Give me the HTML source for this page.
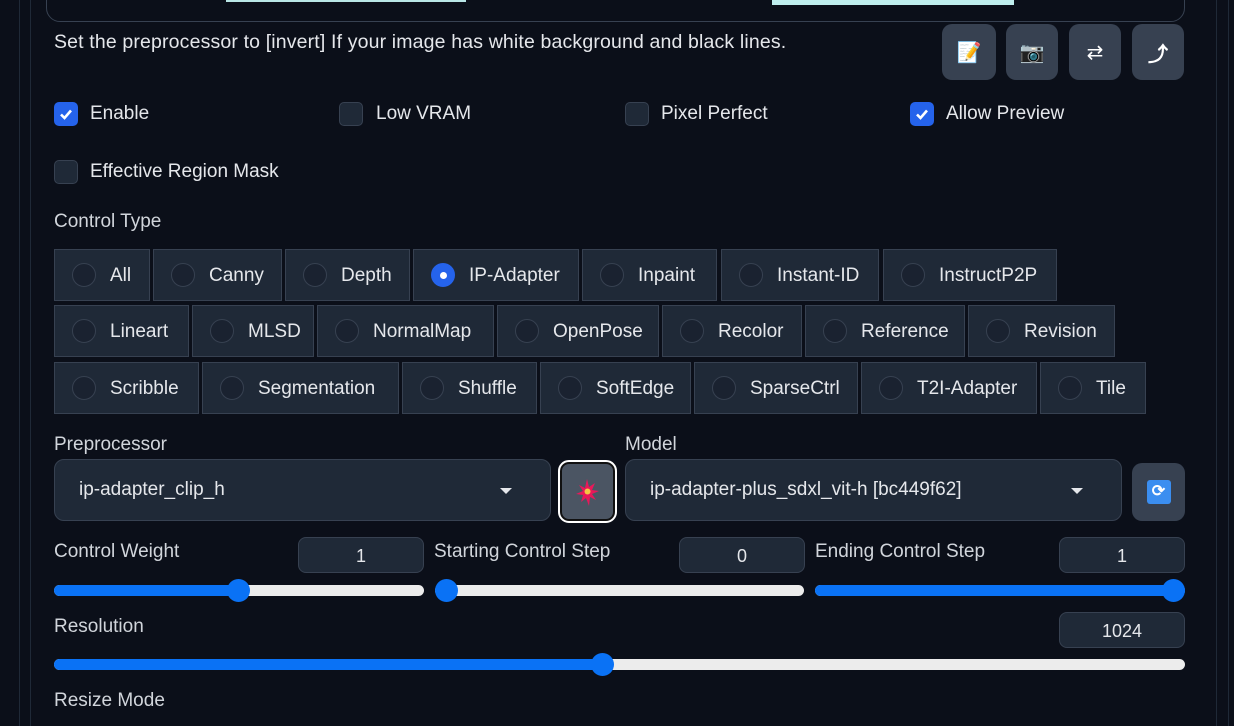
<!DOCTYPE html>
<html><head><style>
*{box-sizing:border-box;margin:0;padding:0}
body{width:1234px;height:726px;background:#0b0f19;font-family:"Liberation Sans",sans-serif;color:#e5e7eb;position:relative;overflow:hidden;font-size:19px}
.a{position:absolute}
.vl{position:absolute;top:0;bottom:0;width:1px;background:#1f2937}
.cb{position:absolute;width:24px;height:24px;border-radius:5px;background:#1f2937;border:1px solid #374151}
.cb.on{background:#2563eb;border-color:#2563eb}
.lbl{position:absolute;font-size:19px;line-height:22px;white-space:nowrap}
.rb{position:absolute;height:52px;background:#1f2937;border:1px solid #374151;font-size:19px;white-space:nowrap}
.rb i{position:absolute;left:17px;top:13px;width:24px;height:24px;border-radius:50%;border:1px solid #374151;background:#1a2230}
.rb i.on{background:#2563eb;border-color:#2563eb}
.rb i.on:after{content:"";position:absolute;left:8px;top:8px;width:7px;height:7px;border-radius:50%;background:#fff}
.rb span{position:absolute;left:55px;top:15px;line-height:22px}
.tb{position:absolute;width:54px;height:56px;border-radius:10px;background:#374151;display:flex;align-items:center;justify-content:center;font-size:20px}
.dd{position:absolute;height:62px;background:#1f2937;border:1px solid #374151;border-radius:10px}
.dd span{position:absolute;left:24px;top:19px;line-height:22px}
.dd b{position:absolute;right:38px;top:28px;border-left:6px solid transparent;border-right:6px solid transparent;border-top:6px solid #e5e7eb}
.num{position:absolute;height:36px;background:#1f2937;border:1px solid #374151;border-radius:8px;text-align:center;line-height:36px;font-size:18px}
.tr{position:absolute;height:11px;border-radius:6px;background:#ececec}
.fill{position:absolute;left:0;top:0;bottom:0;border-radius:6px;background:#0a72f5}
.th{position:absolute;top:-6px;width:23px;height:23px;border-radius:50%;background:#0a72f5}
</style></head><body>
<div class="vl" style="left:19px"></div><div class="vl" style="left:30px"></div>
<div class="vl" style="left:1216px"></div><div class="vl" style="left:1228px"></div>
<div class="a" style="left:46px;top:-20px;width:1139px;height:42px;border:1px solid #374151;border-radius:14px"></div>
<div class="a" style="left:226px;top:0;width:240px;height:2px;background:#b9e6e6"></div>
<div class="a" style="left:772px;top:0;width:242px;height:5px;background:#bfeeee"></div>
<div class="lbl" style="left:54px;top:31px;font-size:19.5px;letter-spacing:0.15px">Set the preprocessor to [invert] If your image has white background and black lines.</div>
<div class="tb" style="left:942px;top:24px">📝</div>
<div class="tb" style="left:1006px;top:24px;width:52px">📷</div>
<div class="tb" style="left:1069px;top:24px;width:52px;color:#fff">⇄</div>
<div class="tb" style="left:1132px;top:24px;width:52px;color:#fff;font-weight:bold">⤴</div>

<div class="cb on" style="left:54px;top:102px"><svg width="22" height="22" viewBox="0 0 22 22"><path d="M6 11.5l3.5 3.5 6.5-7.5" stroke="#fff" stroke-width="2.6" fill="none"/></svg></div>
<div class="lbl" style="left:90px;top:103px">Enable</div>
<div class="cb" style="left:339px;top:102px"></div><div class="lbl" style="left:376px;top:103px">Low VRAM</div>
<div class="cb" style="left:625px;top:102px"></div><div class="lbl" style="left:661px;top:103px">Pixel Perfect</div>
<div class="cb on" style="left:910px;top:102px"><svg width="22" height="22" viewBox="0 0 22 22"><path d="M6 11.5l3.5 3.5 6.5-7.5" stroke="#fff" stroke-width="2.6" fill="none"/></svg></div>
<div class="lbl" style="left:946px;top:103px">Allow Preview</div>
<div class="cb" style="left:54px;top:160px"></div><div class="lbl" style="left:90px;top:161px">Effective Region Mask</div>
<div class="lbl" style="left:54px;top:211px;color:#d1d5db">Control Type</div>

<div class="rb" style="left:54px;top:249px;width:96px"><i></i><span>All</span></div>
<div class="rb" style="left:153px;top:249px;width:129px"><i></i><span>Canny</span></div>
<div class="rb" style="left:285px;top:249px;width:125px"><i></i><span>Depth</span></div>
<div class="rb" style="left:413px;top:249px;width:166px"><i class="on"></i><span>IP-Adapter</span></div>
<div class="rb" style="left:582px;top:249px;width:135px"><i></i><span>Inpaint</span></div>
<div class="rb" style="left:721px;top:249px;width:158px"><i></i><span>Instant-ID</span></div>
<div class="rb" style="left:883px;top:249px;width:174px"><i></i><span>InstructP2P</span></div>

<div class="rb" style="left:54px;top:305px;width:135px"><i></i><span>Lineart</span></div>
<div class="rb" style="left:192px;top:305px;width:122px"><i></i><span>MLSD</span></div>
<div class="rb" style="left:317px;top:305px;width:177px"><i></i><span>NormalMap</span></div>
<div class="rb" style="left:497px;top:305px;width:162px"><i></i><span>OpenPose</span></div>
<div class="rb" style="left:662px;top:305px;width:140px"><i></i><span>Recolor</span></div>
<div class="rb" style="left:805px;top:305px;width:160px"><i></i><span>Reference</span></div>
<div class="rb" style="left:968px;top:305px;width:147px"><i></i><span>Revision</span></div>

<div class="rb" style="left:54px;top:362px;width:145px"><i></i><span>Scribble</span></div>
<div class="rb" style="left:202px;top:362px;width:197px"><i></i><span>Segmentation</span></div>
<div class="rb" style="left:402px;top:362px;width:135px"><i></i><span>Shuffle</span></div>
<div class="rb" style="left:540px;top:362px;width:151px"><i></i><span>SoftEdge</span></div>
<div class="rb" style="left:694px;top:362px;width:164px"><i></i><span>SparseCtrl</span></div>
<div class="rb" style="left:861px;top:362px;width:176px"><i></i><span>T2I-Adapter</span></div>
<div class="rb" style="left:1040px;top:362px;width:106px"><i></i><span>Tile</span></div>

<div class="lbl" style="left:54px;top:434px;color:#d1d5db">Preprocessor</div>
<div class="lbl" style="left:625px;top:434px;color:#d1d5db">Model</div>
<div class="dd" style="left:54px;top:459px;width:497px"><span>ip-adapter_clip_h</span><b></b></div>
<div class="a" style="left:558px;top:460px;width:59px;height:63px;border:2px solid #fff;border-radius:11px;background:#4b5563;box-shadow:inset 0 0 0 2px #111"><svg width="55" height="59" viewBox="0 0 55 59"><path d="M27 17l2 8 6-4-3 7 7 1-7 3 4 6-6-3-1 9-3-8-5 4 2-7-7-1 7-3-4-6 6 3z" fill="#e8185a"/><circle cx="27.5" cy="29.5" r="3" fill="#f5c542"/></svg></div>
<div class="dd" style="left:625px;top:459px;width:497px"><span>ip-adapter-plus_sdxl_vit-h [bc449f62]</span><b></b></div>
<div class="tb" style="left:1132px;top:463px;width:53px;height:58px"><div style="width:24px;height:24px;background:#3b8ef0;border-radius:3px;color:#fff;font-size:16px;text-align:center;line-height:24px;font-weight:bold">⟳</div></div>

<div class="lbl" style="left:54px;top:541px;color:#d1d5db">Control Weight</div>
<div class="num" style="left:298px;top:537px;width:126px">1</div>
<div class="lbl" style="left:434px;top:541px;color:#d1d5db">Starting Control Step</div>
<div class="num" style="left:679px;top:537px;width:126px">0</div>
<div class="lbl" style="left:815px;top:541px;color:#d1d5db">Ending Control Step</div>
<div class="num" style="left:1059px;top:537px;width:126px">1</div>
<div class="tr" style="left:54px;top:585px;width:370px"><div class="fill" style="width:185px"></div><div class="th" style="left:173px"></div></div>
<div class="tr" style="left:435px;top:585px;width:369px"><div class="th" style="left:0"></div></div>
<div class="tr" style="left:815px;top:585px;width:370px"><div class="fill" style="width:370px"></div><div class="th" style="left:347px"></div></div>

<div class="lbl" style="left:54px;top:616px;color:#d1d5db">Resolution</div>
<div class="num" style="left:1059px;top:612px;width:126px">1024</div>
<div class="tr" style="left:54px;top:659px;width:1131px"><div class="fill" style="width:550px"></div><div class="th" style="left:537px"></div></div>
<div class="lbl" style="left:54px;top:690px;color:#d1d5db">Resize Mode</div>
</body></html>
